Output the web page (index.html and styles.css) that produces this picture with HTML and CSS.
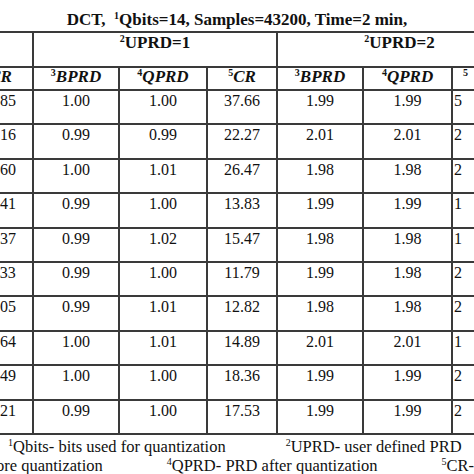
FILE: index.html
```html
<!DOCTYPE html>
<html>
<head>
<meta charset="utf-8">
<link rel="stylesheet" href="styles.css">
</head>
<body>
<div class="page">
  <div class="title">DCT,&nbsp; <span class="sup">1</span>Qbits=14, Samples=43200, Time=2 min,</div>
  <table class="grid">
    <colgroup>
      <col class="c-cr"><col class="c-b"><col class="c-q"><col class="c-cr"><col class="c-b"><col class="c-q2"><col class="c-cr">
    </colgroup>
    <thead>
      <tr class="group-row">
        <th></th>
        <th colspan="3"><span class="sup">2</span>UPRD=1</th>
        <th colspan="3"><span class="sup">2</span>UPRD=2</th>
      </tr>
      <tr class="head-row">
        <th><span class="sup">5</span><i>CR</i></th>
        <th><span class="sup">3</span><i>BPRD</i></th>
        <th><span class="sup">4</span><i>QPRD</i></th>
        <th><span class="sup">5</span><i>CR</i></th>
        <th><span class="sup">3</span><i>BPRD</i></th>
        <th><span class="sup">4</span><i>QPRD</i></th>
        <th class="edge"><span class="sup">5</span></th>
      </tr>
    </thead>
    <tbody>
      <tr><td>37.85</td><td>1.00</td><td>1.00</td><td>37.66</td><td>1.99</td><td>1.99</td><td class="edge">5</td></tr>
      <tr><td>22.16</td><td>0.99</td><td>0.99</td><td>22.27</td><td>2.01</td><td>2.01</td><td class="edge">2</td></tr>
      <tr><td>26.60</td><td>1.00</td><td>1.01</td><td>26.47</td><td>1.98</td><td>1.98</td><td class="edge">2</td></tr>
      <tr><td>13.41</td><td>0.99</td><td>1.00</td><td>13.83</td><td>1.99</td><td>1.99</td><td class="edge">1</td></tr>
      <tr><td>15.37</td><td>0.99</td><td>1.02</td><td>15.47</td><td>1.98</td><td>1.98</td><td class="edge">1</td></tr>
      <tr><td>11.33</td><td>0.99</td><td>1.00</td><td>11.79</td><td>1.99</td><td>1.98</td><td class="edge">2</td></tr>
      <tr><td>12.05</td><td>0.99</td><td>1.01</td><td>12.82</td><td>1.98</td><td>1.98</td><td class="edge">2</td></tr>
      <tr><td>14.64</td><td>1.00</td><td>1.01</td><td>14.89</td><td>2.01</td><td>2.01</td><td class="edge">1</td></tr>
      <tr><td>18.49</td><td>1.00</td><td>1.00</td><td>18.36</td><td>1.99</td><td>1.99</td><td class="edge">2</td></tr>
      <tr><td>17.21</td><td>0.99</td><td>1.00</td><td>17.53</td><td>1.99</td><td>1.99</td><td class="edge">2</td></tr>
    </tbody>
  </table>
  <div class="notes">
    <div class="note-line first">
      <span><span class="sup">1</span>Qbits- bits used for quantization</span>
      <span><span class="sup">2</span>UPRD- user defined PRD</span>
    </div>
    <div class="note-line second">
      <span><span class="sup">3</span>BPRD- PRD before quantization</span>
      <span><span class="sup">4</span>QPRD- PRD after quantization</span>
      <span><span class="sup">5</span>CR-</span>
    </div>
  </div>
</div>
</body>
</html>
```
FILE: styles.css
```css
html, body {
  margin: 0;
  padding: 0;
  background: #fff;
}
body {
  width: 474px;
  height: 474px;
  overflow: hidden;
  font-family: "Liberation Serif", "Times New Roman", serif;
  color: #111;
}
.page {
  width: 474px;
  overflow: hidden;
}
.sup {
  font-size: 10px;
  line-height: 0;
  vertical-align: 6px;
  font-style: normal;
}
.title {
  font-weight: bold;
  font-size: 17px;
  line-height: 20px;
  text-align: center;
  padding-top: 10px;
  height: 21px;
  white-space: nowrap;
}
.grid {
  margin-left: -38px;
  border-collapse: collapse;
  table-layout: fixed;
  width: 559px;
}
.c-cr { width: 70px; }
.c-b { width: 86px; }
.c-q { width: 88px; }
.c-q2 { width: 89px; }
.grid th, .grid td {
  border: 2px solid #3a3a3a;
  padding: 0;
  text-align: center;
  vertical-align: top;
  white-space: nowrap;
}
.grid th {
  font-weight: bold;
  font-size: 17px;
}
.group-row th {
  height: 33px;
  line-height: 20px;
}
.head-row th {
  height: 21px;
  line-height: 18px;
}
.head-row th i {
  font-style: italic;
}
.grid td {
  font-size: 16px;
  line-height: 18px;
  height: 31.4px;
  padding-top: 1px;
  font-weight: normal;
}
.grid .edge {
  text-align: left;
}
.grid td.edge {
  padding-left: 1px;
}
.grid th.edge {
  padding-left: 10px;
}
.notes {
  font-size: 16.5px;
  line-height: 19px;
  white-space: nowrap;
  margin-top: 2px;
}
.note-line {
  display: flex;
  gap: 60px;
}
.note-line.first {
  padding-left: 8px;
}
.note-line.second {
  margin-left: -119px;
  gap: 64px;
}
```
